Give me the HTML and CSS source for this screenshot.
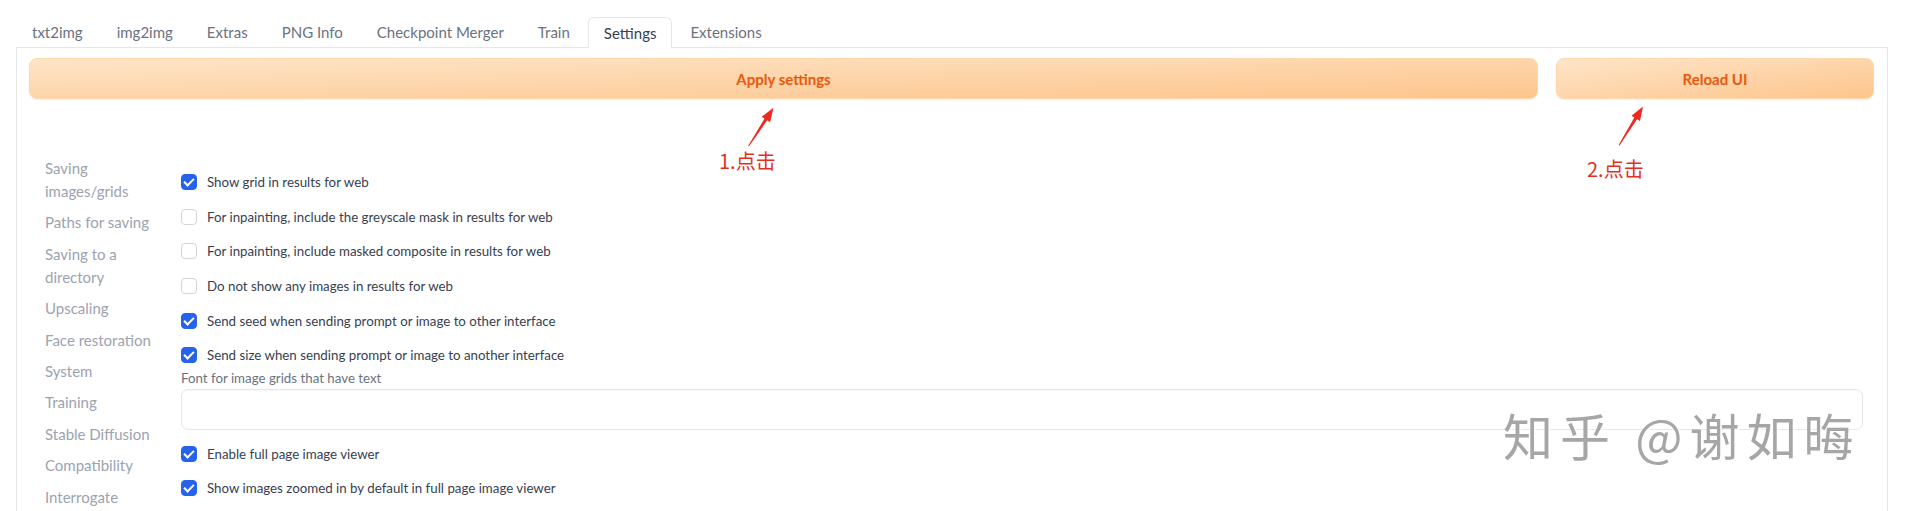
FILE: index.html
```html
<!DOCTYPE html>
<html>
<head>
    <title>Stable Diffusion - Settings</title>
    <link rel="stylesheet" href="styles.css">
</head>
<body>
    <div class="page">
        <div class="tabs">
            <div class="tab">txt2img</div>
            <div class="tab">img2img</div>
            <div class="tab">Extras</div>
            <div class="tab">PNG Info</div>
            <div class="tab">Checkpoint Merger</div>
            <div class="tab">Train</div>
            <div class="tab selected">Settings</div>
            <div class="tab">Extensions</div>
        </div>

        <div class="panel">
            <div class="actions">
                <button class="btn-primary apply">Apply settings</button>
                <button class="btn-primary reload">Reload UI</button>
            </div>

            <div class="settings">
                <ul class="sections">
                    <li>Saving images/grids</li>
                    <li>Paths for saving</li>
                    <li>Saving to a directory</li>
                    <li>Upscaling</li>
                    <li>Face restoration</li>
                    <li>System</li>
                    <li>Training</li>
                    <li>Stable Diffusion</li>
                    <li>Compatibility</li>
                    <li>Interrogate</li>
                </ul>

                <div class="options">
                    <label class="check"><span class="box on"></span>Show grid in results for web</label>
                    <label class="check"><span class="box"></span>For inpainting, include the greyscale mask in results for web</label>
                    <label class="check"><span class="box"></span>For inpainting, include masked composite in results for web</label>
                    <label class="check"><span class="box"></span>Do not show any images in results for web</label>
                    <label class="check"><span class="box on"></span>Send seed when sending prompt or image to other interface</label>
                    <label class="check"><span class="box on"></span>Send size when sending prompt or image to another interface</label>
                    <div class="field-label">Font for image grids that have text</div>
                    <div class="textbox"></div>
                    <label class="check"><span class="box on"></span>Enable full page image viewer</label>
                    <label class="check"><span class="box on"></span>Show images zoomed in by default in full page image viewer</label>
                </div>
            </div>
        </div>

        <!-- annotations drawn over the screenshot -->
        <svg class="arrow arrow-1" viewBox="0 0 12 46" width="12" height="46">
            <polygon points="6,0 11,14 7.6,14 6.5,46 5.5,46 4.4,14 1,14" fill="#ee2a1f"/>
        </svg>
        <div class="note note-1">1.点击</div>
        <svg class="arrow arrow-2" viewBox="0 0 12 46" width="12" height="46">
            <polygon points="6,0 11,14 7.6,14 6.5,46 5.5,46 4.4,14 1,14" fill="#ee2a1f"/>
        </svg>
        <div class="note note-2">2.点击</div>

        <div class="watermark">知乎 @谢如晦</div>
    </div>
</body>
</html>
```

FILE: styles.css
```css
body {
    margin: 0;
    background: #fff;
    font-family: Lato, "Noto Sans", sans-serif;
    color: #374151;
}

.page {
    position: relative;
    padding: 16px 17px 0 16px;
    height: 495px;
    overflow: hidden;
}

.tabs {
    display: flex;
    height: 31px;
}

.tab {
    padding: 0 15px;
    margin-right: 2px;
    border: 1px solid transparent;
    border-bottom: none;
    border-radius: 6px 6px 0 0;
    font-size: 15px;
    line-height: 31px;
    color: #6b7280;
}

.tab.selected {
    border-color: #e5e7eb;
    background: #fff;
    color: #374151;
    position: relative;
    top: 1px;
}

.panel {
    border: 1px solid #e5e7eb;
    border-bottom: none;
    padding: 10px 13px 0 12px;
    height: 500px;
}

.actions {
    display: flex;
    gap: 18px;
}

.btn-primary {
    height: 41px;
    border: 1px solid #fed7aa;
    border-radius: 8px;
    background: linear-gradient(to bottom right, #fee5c8, #fdc58c);
    box-shadow: 0 1px 2px rgba(0, 0, 0, 0.06);
    font-family: inherit;
    font-size: 15px;
    font-weight: 700;
    color: #ea580c;
}

.apply {
    flex: 1;
}

.reload {
    width: 318px;
}

.settings {
    display: flex;
    margin-top: 58px;
}

.sections {
    list-style: none;
    margin: 0 16px;
    padding: 0;
    width: 120px;
    flex-shrink: 0;
}

.sections li {
    font-size: 15px;
    line-height: 23px;
    margin-bottom: 8.4px;
    color: #9ca3af;
}

.options {
    flex: 1;
    padding: 8px 11px 0 0;
}

.check {
    display: flex;
    align-items: center;
    height: 34.6px;
    font-size: 13.3px;
    color: #374151;
}

.box {
    width: 14px;
    height: 14px;
    margin-right: 10px;
    border: 1px solid #d1d5db;
    border-radius: 4px;
    background: #fff;
    position: relative;
}

.box.on {
    background: #2563eb;
    border-color: #2563eb;
}

.box.on::after {
    content: "";
    position: absolute;
    left: 4px;
    top: 1px;
    width: 4px;
    height: 8px;
    border: solid #fff;
    border-width: 0 2px 2px 0;
    transform: rotate(45deg);
}

.field-label {
    margin-top: -3px;
    font-size: 13.3px;
    line-height: 16px;
    color: #6b7280;
}

.textbox {
    margin-top: 3px;
    margin-bottom: 7px;
    height: 39px;
    border: 1px solid #e5e7eb;
    border-radius: 7px;
    box-shadow: inset 0 1px 2px rgba(0, 0, 0, 0.04);
}

.arrow {
    position: absolute;
}

.arrow-1 {
    left: 755px;
    top: 104px;
    transform: rotate(33deg);
}

.arrow-2 {
    left: 1625px;
    top: 103px;
    transform: rotate(31.6deg);
}

.note {
    position: absolute;
    font-family: "Noto Sans CJK SC", sans-serif;
    font-size: 20px;
    line-height: 20px;
    color: #e0321f;
}

.note-1 {
    left: 719px;
    top: 151px;
}

.note-2 {
    left: 1587px;
    top: 159px;
}

.watermark {
    position: absolute;
    left: 1503px;
    top: 405px;
    font-family: "Noto Sans CJK SC", sans-serif;
    font-size: 50px;
    line-height: 58px;
    letter-spacing: 7px;
    color: #a6a6a6;
    text-shadow: 2px 2px 0 rgba(255, 255, 255, 0.6);
    white-space: nowrap;
}
```
